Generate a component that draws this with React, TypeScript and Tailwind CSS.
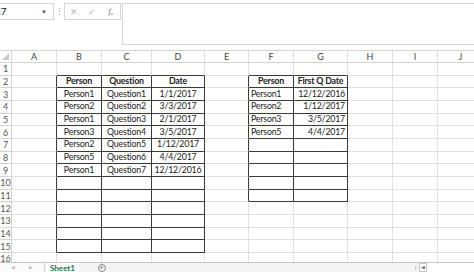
const COLS = ["A", "B", "C", "D", "E", "F", "G", "H", "I", "J"];
const COL_WIDTHS = "grid-cols-[12px_45px_45px_50px_53px_44px_45px_54px_45px_45px_46px]";

type Cell = { text: string; bold?: boolean; align?: "left" | "center" | "right" };

const cells: Record<string, Cell> = {};
const put = (row: number, col: number, text: string, opts: Partial<Cell> = {}) => {
  cells[`${row}-${col}`] = { text, align: "center", ...opts };
};

// left table B2:D15
put(2, 1, "Person", { bold: true });
put(2, 2, "Question", { bold: true });
put(2, 3, "Date", { bold: true });
const answers = [
  ["Person1", "Question1", "1/1/2017"],
  ["Person2", "Question2", "3/3/2017"],
  ["Person1", "Question3", "2/1/2017"],
  ["Person3", "Question4", "3/5/2017"],
  ["Person2", "Question5", "1/12/2017"],
  ["Person5", "Question6", "4/4/2017"],
  ["Person1", "Question7", "12/12/2016"],
];
answers.forEach((r, i) => r.forEach((v, j) => put(3 + i, 1 + j, v)));

// right table F2:G11
put(2, 5, "Person", { bold: true });
put(2, 6, "First Q Date", { bold: true });
const firsts = [
  ["Person1", "12/12/2016"],
  ["Person2", "1/12/2017"],
  ["Person3", "3/5/2017"],
  ["Person5", "4/4/2017"],
];
firsts.forEach((r, i) => {
  put(3 + i, 5, r[0], { align: "left" });
  put(3 + i, 6, r[1], { align: "right" });
});

function inTable(row: number, col: number) {
  if (row >= 2 && row <= 15 && col >= 1 && col <= 3) return true;
  if (row >= 2 && row <= 11 && col >= 5 && col <= 6) return true;
  return false;
}

function FormulaBar() {
  return (
    <div className="flex h-[50px] items-start bg-white pt-[3px]">
      <div className="flex h-[17px] w-[54px] items-center border border-l-0 border-[#d6d6d6] pr-[6px]">
        <span className="-ml-[2px] flex-1 text-[10px] text-[#222]">I7</span>
        <span className="text-[6px] text-[#555]">▼</span>
      </div>
      <div className="flex h-[17px] w-[10px] flex-col items-center justify-center gap-[2px]">
        <span className="h-[1px] w-[1px] bg-[#aaa]" />
        <span className="h-[1px] w-[1px] bg-[#aaa]" />
        <span className="h-[1px] w-[1px] bg-[#aaa]" />
      </div>
      <div className="flex h-[17px] w-[57px] items-center border border-[#d6d6d6] text-[#b5b5b5]">
        <span className="w-[19px] text-center text-[9px]">✕</span>
        <span className="w-[19px] text-center text-[9px]">✓</span>
        <span className="w-[19px] text-center font-['Liberation_Serif',serif] text-[8px] italic text-[#666]">
          f<sub className="text-[5px]">x</sub>
        </span>
      </div>
      <div className="ml-[1px] h-[42px] flex-1 border border-r-0 border-[#d6d6d6]" />
    </div>
  );
}

function HeaderRow() {
  return (
    <div className={`grid ${COL_WIDTHS} h-[13px] border-y border-[#d4d4d4] bg-white`}>
      <div className="relative border-r border-[#d4d4d4]">
        <span className="absolute bottom-[2px] right-[2px] h-0 w-0 border-b-[7px] border-l-[7px] border-b-[#c8c8c8] border-l-transparent" />
      </div>
      {COLS.map((c) => (
        <div
          key={c}
          className="flex items-center justify-center border-r border-[#e1e1e1] text-[9px] leading-none text-[#444]"
        >
          {c}
        </div>
      ))}
    </div>
  );
}

function Grid() {
  const rows = Array.from({ length: 16 }, (_, i) => i + 1);
  return (
    <div className="flex-1 overflow-hidden">
      {rows.map((r) => (
        <div key={r} className={`grid ${COL_WIDTHS} h-[12.67px]`}>
          <div className="flex items-center justify-center border-b border-r border-[#d4d4d4] text-[9px] leading-none text-[#555]">
            {r}
          </div>
          {COLS.map((_, c) => {
            const cell = cells[`${r}-${c}`];
            const darkRight = inTable(r, c) || inTable(r, c + 1);
            const darkBottom = inTable(r, c) || inTable(r + 1, c);
            const align =
              cell?.align === "left"
                ? "justify-start pl-[2px]"
                : cell?.align === "right"
                ? "justify-end pr-[2px]"
                : "justify-center";
            return (
              <div
                key={c}
                className={`flex items-center overflow-visible whitespace-nowrap border-b border-r text-[8.8px] leading-none tracking-[-0.2px] text-[#1a1a1a] ${align} ${
                  darkRight ? "border-r-[#3a3a3a]" : "border-r-[#e1e1e1]"
                } ${darkBottom ? "border-b-[#3a3a3a]" : "border-b-[#e1e1e1]"} ${cell?.bold ? "font-bold" : ""}`}
              >
                {cell?.text}
              </div>
            );
          })}
        </div>
      ))}
    </div>
  );
}

function SheetTabs() {
  return (
    <div className="flex h-[10px] items-stretch border-t border-[#c6c6c6] bg-[#f3f3f3] text-[8px] leading-none">
      <div className="flex w-[45px] items-center justify-around border-r border-[#d6d6d6] bg-[#fafafa] px-[4px] text-[5px] text-[#c0c0c0]">
        <span>◀</span>
        <span>▶</span>
      </div>
      <div className="ml-[1px] flex w-[33px] items-start justify-center bg-white pt-[1px]">
        <span className="border-b border-[#217346] font-bold text-[#217346]">Sheet1</span>
      </div>
      <div className="flex w-[45px] items-center justify-center">
        <span className="flex h-[8px] w-[8px] items-center justify-center rounded-full border border-[#888] text-[7px] text-[#666]">
          +
        </span>
      </div>
      <div className="flex-1" />
      <div className="flex w-[8px] flex-col items-center justify-center gap-[1px]">
        <span className="h-[1px] w-[1px] bg-[#aaa]" />
        <span className="h-[1px] w-[1px] bg-[#aaa]" />
      </div>
      <div className="flex w-[8px] items-center justify-center border border-[#c6c6c6] bg-white text-[5px] text-[#777]">
        ◀
      </div>
      <div className="w-[47px] bg-white" />
    </div>
  );
}

export default function App() {
  return (
    <div className="flex h-[272px] w-[474px] flex-col overflow-hidden bg-white font-['Lato','Liberation_Sans',sans-serif]">
      <FormulaBar />
      <HeaderRow />
      <Grid />
      <SheetTabs />
    </div>
  );
}
